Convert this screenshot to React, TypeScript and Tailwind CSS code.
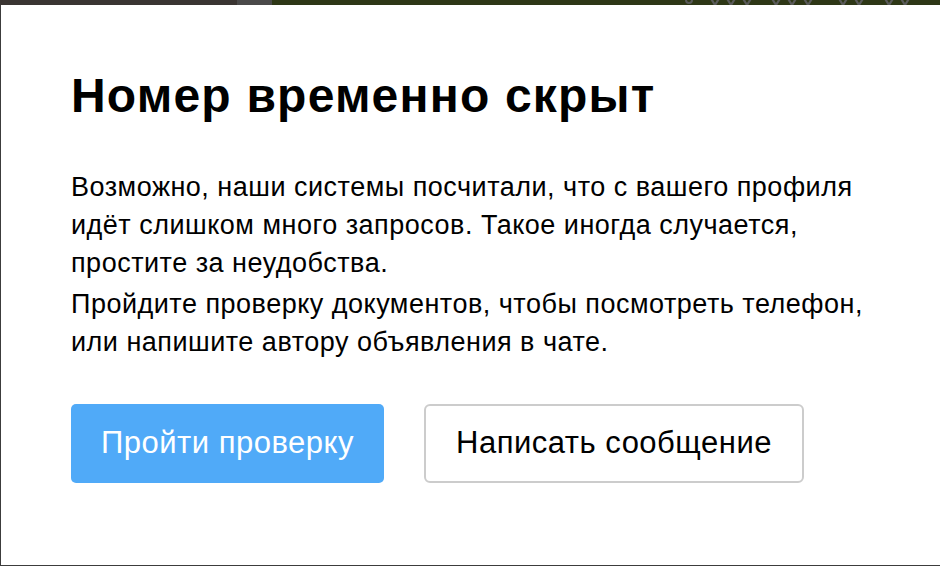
import React from 'react';

// chevron marks peeking out of the top strip
const CHEVRONS = [710, 726, 742, 771, 787, 803, 838, 854, 884, 900];

function TopStrip() {
  return (
    <div className="flex h-[5px] w-full">
      <div className="w-[237px] bg-[#3a3532]" />
      <div className="w-[35px] bg-[#4a4949]" />
      <div className="relative flex-1 bg-[#2e3716]">
        <svg className="absolute left-0 top-0" width="668" height="5" viewBox="272 0 668 5">
          <circle cx="689" cy="0" r="3" fill="none" stroke="#5a5a5a" strokeWidth="2" />
          {CHEVRONS.map(x => (
            <polyline key={x} points={`${x},-3 ${x + 5},5 ${x + 10},-3`} fill="none" stroke="#5a5a5a" strokeWidth="2.2" />
          ))}
        </svg>
      </div>
    </div>
  );
}

export default function App() {
  return (
    <div className="h-[566px] w-[940px] overflow-hidden bg-white font-['Liberation_Sans',Arial,sans-serif] text-black">
      <TopStrip />
      <div className="h-[561px] border-b border-l border-[#3c3c3c] pl-[70px] pt-[65px]">
        <h1 className="text-[48px] font-bold leading-[52px] tracking-[1.2px]">Номер временно скрыт</h1>

        <div className="mt-[46px] text-[27px] leading-[38px] tracking-[0.5px]">
          <p>
            Возможно, наши системы посчитали, что с вашего профиля
            <br />
            идёт слишком много запросов. Такое иногда случается,
            <br />
            простите за неудобства.
          </p>
          <p className="mt-[3px]">
            Пройдите проверку документов, чтобы посмотреть телефон,
            <br />
            или напишите автору объявления в чате.
          </p>
        </div>

        <div className="mt-[43px] flex gap-[40px]">
          <button className="flex h-[79px] w-[313px] items-center justify-center rounded-[5px] bg-[#50aaf8] text-[31px] tracking-[0.5px] text-white">
            Пройти проверку
          </button>
          <button className="flex h-[79px] w-[380px] items-center justify-center rounded-[6px] border-2 border-[#cccccc] bg-white text-[31px] tracking-[0.5px] text-black">
            Написать сообщение
          </button>
        </div>
      </div>
    </div>
  );
}
